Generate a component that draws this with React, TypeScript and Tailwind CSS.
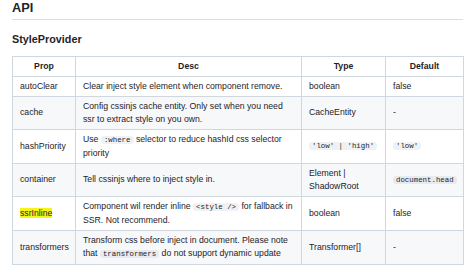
import type { ReactNode } from "react"

const font = "font-['Liberation_Sans',Arial,sans-serif]"

function Code({ children }: { children: ReactNode }) {
  return (
    <code className="rounded-[3px] bg-[#afb8c133] px-[3px] py-0 font-['Liberation_Mono',monospace] text-[7.4px]">
      {children}
    </code>
  )
}

type Row = { prop: ReactNode; desc: ReactNode; type: ReactNode; def: ReactNode }

const rows: Row[] = [
  {
    prop: "autoClear",
    desc: "Clear inject style element when component remove.",
    type: "boolean",
    def: "false",
  },
  {
    prop: "cache",
    desc: "Config cssinjs cache entity. Only set when you need ssr to extract style on you own.",
    type: "CacheEntity",
    def: "-",
  },
  {
    prop: "hashPriority",
    desc: (
      <>
        Use <Code>:where</Code> selector to reduce hashId css selector priority
      </>
    ),
    type: <Code>'low' | 'high'</Code>,
    def: <Code>'low'</Code>,
  },
  {
    prop: "container",
    desc: "Tell cssinjs where to inject style in.",
    type: "Element | ShadowRoot",
    def: <Code>document.head</Code>,
  },
  {
    prop: <mark className="bg-[#f4f41a] text-[#1f2328]">ssrInline</mark>,
    desc: (
      <>
        Component wil render inline <Code>{"<style />"}</Code> for fallback in SSR. Not recommend.
      </>
    ),
    type: "boolean",
    def: "false",
  },
  {
    prop: "transformers",
    desc: (
      <>
        Transform css before inject in document. Please note that <Code>transformers</Code> do not
        support dynamic update
      </>
    ),
    type: "Transformer[]",
    def: "-",
  },
]

const cell = "border border-[#d0d7de] px-[7px] py-[3px] align-middle"

export default function App() {
  return (
    <div className={`min-h-screen bg-white px-[12px] text-[#1f2328] ${font}`}>
      <div className="w-[451px]">
        <h2 className="border-b border-[#d8dee4] pb-[3px] text-[12.8px] leading-[16px] font-bold">
          API
        </h2>
        <h3 className="mt-[13px] mb-[9px] text-[10.8px] leading-[13.5px] font-bold">
          StyleProvider
        </h3>
        <table className="w-[451px] table-fixed border-collapse text-[8.7px] leading-[13px]">
          <colgroup>
            <col className="w-[63px]" />
            <col className="w-[226px]" />
            <col className="w-[84px]" />
            <col className="w-[78px]" />
          </colgroup>
          <thead>
            <tr className="bg-white">
              <th className={`${cell} font-bold`}>Prop</th>
              <th className={`${cell} font-bold`}>Desc</th>
              <th className={`${cell} font-bold`}>Type</th>
              <th className={`${cell} font-bold`}>Default</th>
            </tr>
          </thead>
          <tbody>
            {rows.map((row, i) => (
              <tr key={i} className={i % 2 === 1 ? "bg-[#f6f8fa]" : "bg-white"}>
                <td className={cell}>{row.prop}</td>
                <td className={cell}>{row.desc}</td>
                <td className={cell}>{row.type}</td>
                <td className={cell}>{row.def}</td>
              </tr>
            ))}
          </tbody>
        </table>
      </div>
    </div>
  )
}
